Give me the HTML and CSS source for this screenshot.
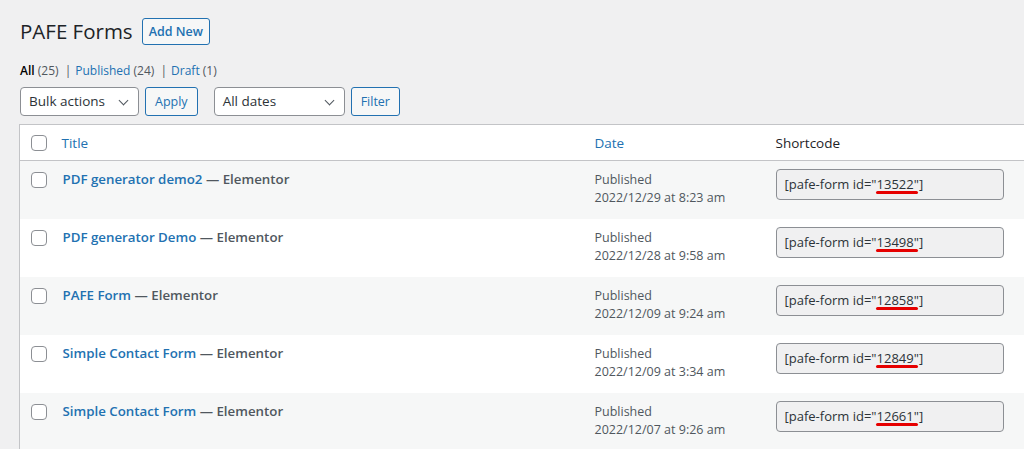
FILE: index.html
```html
<!DOCTYPE html>
<html lang="en">
<head>
    <meta charset="UTF-8">
    <title>PAFE Forms</title>
    <link rel="stylesheet" href="styles.css">
</head>
<body>
    <div class="wrap">
        <div class="page-head">
            <h1>PAFE Forms</h1>
            <a class="page-title-action" href="#">Add New</a>
        </div>

        <ul class="subsubsub">
            <li><a class="current" href="#">All <span class="count">(25)</span></a> |</li>
            <li><a href="#">Published <span class="count">(24)</span></a> |</li>
            <li><a href="#">Draft <span class="count">(1)</span></a></li>
        </ul>

        <div class="tablenav">
            <div class="select select-bulk">Bulk actions <span class="chev"></span></div>
            <button class="btn">Apply</button>
            <div class="select select-dates">All dates <span class="chev"></span></div>
            <button class="btn">Filter</button>
        </div>

        <table class="list-table">
            <thead>
                <tr>
                    <td class="check-col"><span class="cb"></span></td>
                    <th class="col-title"><a href="#">Title</a></th>
                    <th class="col-date"><a href="#">Date</a></th>
                    <th class="col-short">Shortcode</th>
                </tr>
            </thead>
            <tbody>
                <tr class="alt">
                    <td class="check-col"><span class="cb"></span></td>
                    <td class="col-title"><a class="row-title" href="#">PDF generator demo2</a> — Elementor</td>
                    <td class="col-date">Published<br>2022/12/29 at 8:23 am</td>
                    <td class="col-short"><div class="shortcode">[pafe-form id="<span class="mark">13522</span>"]</div></td>
                </tr>
                <tr>
                    <td class="check-col"><span class="cb"></span></td>
                    <td class="col-title"><a class="row-title" href="#">PDF generator Demo</a> — Elementor</td>
                    <td class="col-date">Published<br>2022/12/28 at 9:58 am</td>
                    <td class="col-short"><div class="shortcode">[pafe-form id="<span class="mark">13498</span>"]</div></td>
                </tr>
                <tr class="alt">
                    <td class="check-col"><span class="cb"></span></td>
                    <td class="col-title"><a class="row-title" href="#">PAFE Form</a> — Elementor</td>
                    <td class="col-date">Published<br>2022/12/09 at 9:24 am</td>
                    <td class="col-short"><div class="shortcode">[pafe-form id="<span class="mark">12858</span>"]</div></td>
                </tr>
                <tr>
                    <td class="check-col"><span class="cb"></span></td>
                    <td class="col-title"><a class="row-title" href="#">Simple Contact Form</a> — Elementor</td>
                    <td class="col-date">Published<br>2022/12/09 at 3:34 am</td>
                    <td class="col-short"><div class="shortcode">[pafe-form id="<span class="mark">12849</span>"]</div></td>
                </tr>
                <tr class="alt">
                    <td class="check-col"><span class="cb"></span></td>
                    <td class="col-title"><a class="row-title" href="#">Simple Contact Form</a> — Elementor</td>
                    <td class="col-date">Published<br>2022/12/07 at 9:26 am</td>
                    <td class="col-short"><div class="shortcode">[pafe-form id="<span class="mark">12661</span>"]</div></td>
                </tr>
            </tbody>
        </table>
    </div>
</body>
</html>
```

FILE: styles.css
```css
* {
    margin: 0;
    padding: 0;
    box-sizing: border-box;
}

html, body {
    overflow: hidden;
}

body {
    background: #f0f0f1;
    color: #3c434a;
    font-family: "Open Sans", "Noto Sans", sans-serif;
    font-size: 13px;
    line-height: 1.4;
}

a {
    color: #2271b1;
    text-decoration: none;
}

.wrap {
    width: 1060px;
    padding: 0 0 0 19px;
}

.page-head {
    display: flex;
    align-items: center;
    gap: 9px;
    padding: 17px 0 0 1px;
}

h1 {
    font-size: 20.5px;
    font-weight: 400;
    color: #1d2327;
    line-height: 28px;
}

.page-title-action {
    display: inline-block;
    border: 1px solid #2271b1;
    border-radius: 3px;
    background: #f6f7f7;
    font-size: 12.5px;
    font-weight: 600;
    line-height: 25px;
    padding: 0 6px;
}

.subsubsub {
    list-style: none;
    display: flex;
    gap: 4px;
    padding: 17px 0 0 1px;
    color: #50575e;
    font-size: 12px;
    line-height: 18px;
}

.subsubsub li {
    white-space: nowrap;
}

.subsubsub a {
    margin-right: 3px;
}

.subsubsub a.current {
    color: #000;
    font-weight: 600;
}

.subsubsub .count {
    color: #50575e;
    font-weight: 400;
}

.tablenav {
    display: flex;
    align-items: center;
    padding: 6px 0 0 1px;
    height: 36px;
}

.select {
    position: relative;
    height: 29px;
    border: 1px solid #8c8f94;
    border-radius: 4px;
    background: #fff;
    color: #2c3338;
    font-size: 13.5px;
    line-height: 27px;
    padding-left: 8px;
}

.select-bulk {
    width: 119px;
    margin-right: 6px;
}

.select-dates {
    width: 131px;
    margin: 0 6px 0 16px;
}

.chev {
    position: absolute;
    right: 11px;
    top: 9px;
    width: 7px;
    height: 7px;
    border-right: 1.5px solid #50575e;
    border-bottom: 1.5px solid #50575e;
    transform: rotate(45deg);
}

.btn {
    height: 29px;
    border: 1px solid #2271b1;
    border-radius: 3px;
    background: #f6f7f7;
    color: #2271b1;
    font-family: inherit;
    font-size: 12.5px;
    padding: 0 9px;
}

.list-table {
    margin-top: 8px;
    width: 1040px;
    border-collapse: collapse;
    background: #fff;
    border: 1px solid #c3c4c7;
    table-layout: fixed;
}

.list-table thead td,
.list-table thead th {
    height: 36px;
    padding-top: 1px;
    border-bottom: 1px solid #c3c4c7;
    text-align: left;
    font-weight: 400;
    font-size: 13.5px;
    color: #1d2327;
    vertical-align: middle;
}

.list-table tbody td {
    height: 58px;
    vertical-align: top;
}

.list-table tr.alt {
    background: #f6f7f7;
}

.check-col {
    width: 33px;
    padding-left: 11px;
}

.cb {
    display: block;
    width: 16px;
    height: 16px;
    border: 1px solid #8c8f94;
    border-radius: 4px;
    background: #fff;
}

tbody .check-col .cb {
    margin-top: 11px;
}

thead .col-title {
    padding-left: 9px;
}

.col-title {
    width: 532px;
    padding-left: 10px;
}

tbody .col-title {
    padding-top: 9px;
    font-size: 13.3px;
    color: #50575e;
    font-weight: 600;
}

.row-title {
    font-weight: 600;
}

.col-date {
    width: 181px;
    padding-left: 10px;
}

tbody .col-date {
    padding-top: 10px;
    color: #50575e;
    font-size: 12.5px;
    line-height: 18px;
}

.col-short {
    padding-left: 10px;
}

tbody .col-short {
    padding-top: 8px;
}

.shortcode {
    width: 228px;
    height: 31px;
    border: 1px solid #8c8f94;
    border-radius: 4px;
    background: #f0f0f1;
    color: #2c3338;
    font-size: 13px;
    line-height: 29px;
    padding-left: 8px;
}

.mark {
    position: relative;
}

.mark::after {
    content: "";
    position: absolute;
    left: -1px;
    right: -4px;
    bottom: -1px;
    height: 3px;
    border-radius: 2px;
    background: #e60000;
}
```
